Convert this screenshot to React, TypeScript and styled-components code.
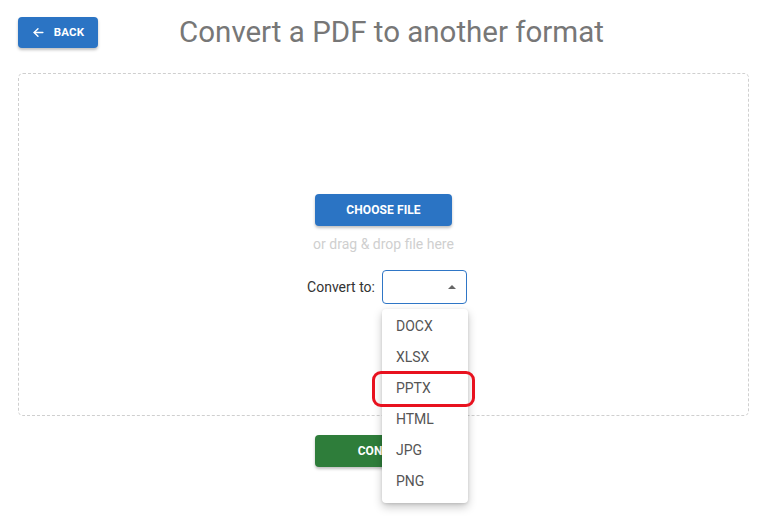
import React from "react";
import styled, { createGlobalStyle } from "styled-components";

const Global = createGlobalStyle`
  html, body { margin: 0; padding: 0; background: #fff; }
  body { font-family: Roboto, "Noto Sans", Arial, sans-serif; width: 768px; height: 528px; overflow: hidden; }
  * { box-sizing: border-box; }
`;

const Page = styled.div`
  width: 768px;
  padding: 16px 19px 0 18px;
  display: flex;
  flex-direction: column;
`;

const Header = styled.div`
  display: grid;
  grid-template-columns: 80px 1fr 64px;
  align-items: center;
  height: 32px;
`;

const Button = styled.button<{ $color: string }>`
  border: none;
  border-radius: 4px;
  background: ${(p) => p.$color};
  color: #fff;
  font-family: Roboto, Arial, sans-serif;
  font-weight: 700;
  text-transform: uppercase;
  display: flex;
  align-items: center;
  justify-content: center;
  box-shadow: 0 2px 3px rgba(0, 0, 0, 0.25);
  cursor: pointer;
  padding: 0;
`;

const BackButton = styled(Button)`
  width: 80px;
  height: 31px;
  font-size: 11.5px;
  gap: 9px;
  letter-spacing: 0.2px;
`;

const Title = styled.h1`
  margin: 0;
  text-align: center;
  font-size: 29.5px;
  font-weight: 400;
  color: #777;
  line-height: 32px;
`;

const DropZone = styled.div`
  margin-top: 25px;
  height: 343px;
  border: 1px dashed #cfcfcf;
  border-radius: 5px;
  display: flex;
  flex-direction: column;
  align-items: center;
  padding-top: 120px;
`;

const ChooseButton = styled(Button)`
  width: 137px;
  height: 32px;
  font-size: 12px;
  letter-spacing: 0.1px;
`;

const Hint = styled.div`
  margin-top: 8px;
  font-size: 14px;
  color: #cfcfcf;
  line-height: 20px;
`;

const ConvertRow = styled.div`
  margin-top: 16px;
  display: flex;
  align-items: center;
  gap: 7px;
  padding-left: 7px;
`;

const Label = styled.span`
  font-size: 14px;
  color: #333;
`;

const SelectWrap = styled.div`
  position: relative;
`;

const SelectBox = styled.div`
  width: 85px;
  height: 34px;
  border: 1.5px solid #2f76c6;
  border-radius: 4px;
  display: flex;
  align-items: center;
  justify-content: flex-end;
  padding-right: 10px;
`;

const Caret = styled.span`
  width: 0;
  height: 0;
  border-left: 4px solid transparent;
  border-right: 4px solid transparent;
  border-bottom: 4px solid #666;
`;

const Menu = styled.ul`
  position: absolute;
  top: 39px;
  left: 0;
  width: 86px;
  margin: 0;
  padding: 2px 0 6px;
  list-style: none;
  background: #fff;
  border-radius: 4px;
  box-shadow: 0 4px 10px rgba(0, 0, 0, 0.22), 0 1px 3px rgba(0, 0, 0, 0.12);
  z-index: 5;
`;

const MenuItem = styled.li`
  height: 31px;
  line-height: 31px;
  padding-left: 14px;
  font-size: 14px;
  color: #555;
`;

const Highlight = styled.div`
  position: absolute;
  left: -10px;
  top: 101px;
  width: 103px;
  height: 36px;
  border: 3.5px solid #e8121f;
  border-radius: 9px;
  pointer-events: none;
  z-index: 6;
`;

const Footer = styled.div`
  display: flex;
  justify-content: center;
  margin-top: 19px;
  padding-left: 3px;
`;

const ConvertButton = styled(Button)`
  width: 141px;
  height: 32px;
  font-size: 12px;
  letter-spacing: 0.1px;
`;

const formats = ["DOCX", "XLSX", "PPTX", "HTML", "JPG", "PNG"];

export default function App() {
  return (
    <>
      <Global />
      <Page>
        <Header>
          <BackButton $color="#2b74c4">
            <svg width="13" height="13" viewBox="0 0 24 24" fill="none" stroke="#fff" strokeWidth="2.6" strokeLinecap="round" strokeLinejoin="round">
              <path d="M20 12H4" />
              <path d="M11 5l-7 7 7 7" />
            </svg>
            Back
          </BackButton>
          <Title>Convert a PDF to another format</Title>
          <div />
        </Header>
        <DropZone>
          <ChooseButton $color="#2b74c4">Choose File</ChooseButton>
          <Hint>or drag &amp; drop file here</Hint>
          <ConvertRow>
            <Label>Convert to:</Label>
            <SelectWrap>
              <SelectBox>
                <Caret />
              </SelectBox>
              <Menu>
                {formats.map((f) => (
                  <MenuItem key={f}>{f}</MenuItem>
                ))}
              </Menu>
              <Highlight />
            </SelectWrap>
          </ConvertRow>
        </DropZone>
        <Footer>
          <ConvertButton $color="#2e7d3a">Convert</ConvertButton>
        </Footer>
      </Page>
    </>
  );
}
